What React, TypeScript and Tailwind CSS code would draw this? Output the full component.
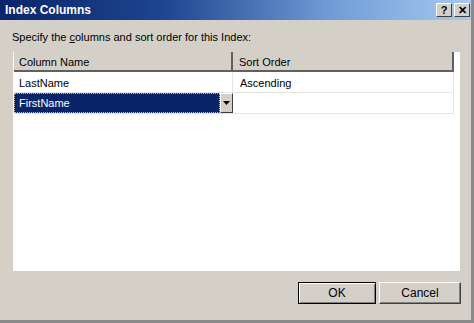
import React from "react";

const font = { fontFamily: '"Liberation Sans", Arial, sans-serif' };

function TitleButton({ label }: { label: string }) {
  return (
    <div className="w-4 h-[14px] bg-[#d4d0c8] border border-t-white border-l-white border-r-[#404040] border-b-[#404040] flex items-center justify-center text-[11px] font-bold leading-none text-black">
      {label}
    </div>
  );
}

function Button({ label, primary }: { label: string; primary?: boolean }) {
  return (
    <div
      className={
        "h-[22px] flex items-center justify-center bg-[#d4d0c8] text-[12px] text-black " +
        (primary
          ? "w-[78px] border border-black shadow-[inset_1px_1px_0_#fff,inset_-1px_-1px_0_#808080]"
          : "w-[82px] border border-t-white border-l-white border-r-[#404040] border-b-[#404040] shadow-[inset_-1px_-1px_0_#808080]")
      }
    >
      {label}
    </div>
  );
}

export default function App() {
  return (
    <div className="w-[474px] h-[323px] bg-[#d4d0c8] flex flex-col border-r-[3px] border-b-[3px] border-r-[#8a8a8a] border-b-[#8a8a8a] overflow-hidden" style={font}>
      <div className="h-5 shrink-0 flex items-center justify-between pl-[5px] pr-[1px] bg-[linear-gradient(to_right,#0a246a,#1e4690_35%,#6f9bd6_70%,#a6caf0)]">
        <span className="text-white font-bold text-[12px]">Index Columns</span>
        <div className="flex gap-[2px]">
          <TitleButton label="?" />
          <TitleButton label="✕" />
        </div>
      </div>

      <div className="flex-1 flex flex-col pl-[12px] pr-[10px]">
        <div className="h-[32px] flex items-center text-[11px] text-black pt-[3px]">
          <span>
            Specify the <span className="underline">c</span>olumns and sort order for this Index:
          </span>
        </div>

        <div className="ml-[1px] w-[447px] h-[219px] bg-white flex flex-col pl-[1px] text-[11px] text-black">
          <div className="flex h-5 w-[440px]">
            <div className="w-[219px] bg-[#d4d0c8] border-r-2 border-b-2 border-r-[#606060] border-b-[#606060] flex items-center pl-[5px] pt-[2px]">
              Column Name
            </div>
            <div className="flex-1 bg-[#d4d0c8] border-r-2 border-b-2 border-r-[#606060] border-b-[#606060] flex items-center pl-[6px] pt-[2px]">
              Sort Order
            </div>
          </div>
          <div className="flex h-[21px] w-[440px] border-b border-[#e4e4e4]">
            <div className="w-[219px] border-r border-[#e4e4e4] flex items-center pl-[5px] pt-[2px]">LastName</div>
            <div className="flex-1 border-r border-[#e4e4e4] flex items-center pl-[7px] pt-[2px]">Ascending</div>
          </div>
          <div className="flex h-[21px] w-[440px] border-b border-[#e4e4e4]">
            <div className="w-[219px] flex items-stretch">
              <div className="flex-1 bg-[#0a246a] text-white border border-dotted border-[#c0c0c0] flex items-center pl-[4px] pt-[1px]">
                FirstName
              </div>
              <div className="w-[13px] bg-[#d4d0c8] border border-t-white border-l-white border-r-[#404040] border-b-[#404040] flex items-center justify-center">
                <svg width="7" height="4" viewBox="0 0 7 4"><path d="M0 0h7L3.5 4z" fill="#000" /></svg>
              </div>
            </div>
            <div className="flex-1 border-r border-[#e4e4e4]" />
          </div>
        </div>

        <div className="flex justify-end gap-[3px] pt-[11px]">
          <Button label="OK" primary />
          <Button label="Cancel" />
        </div>
      </div>
    </div>
  );
}
